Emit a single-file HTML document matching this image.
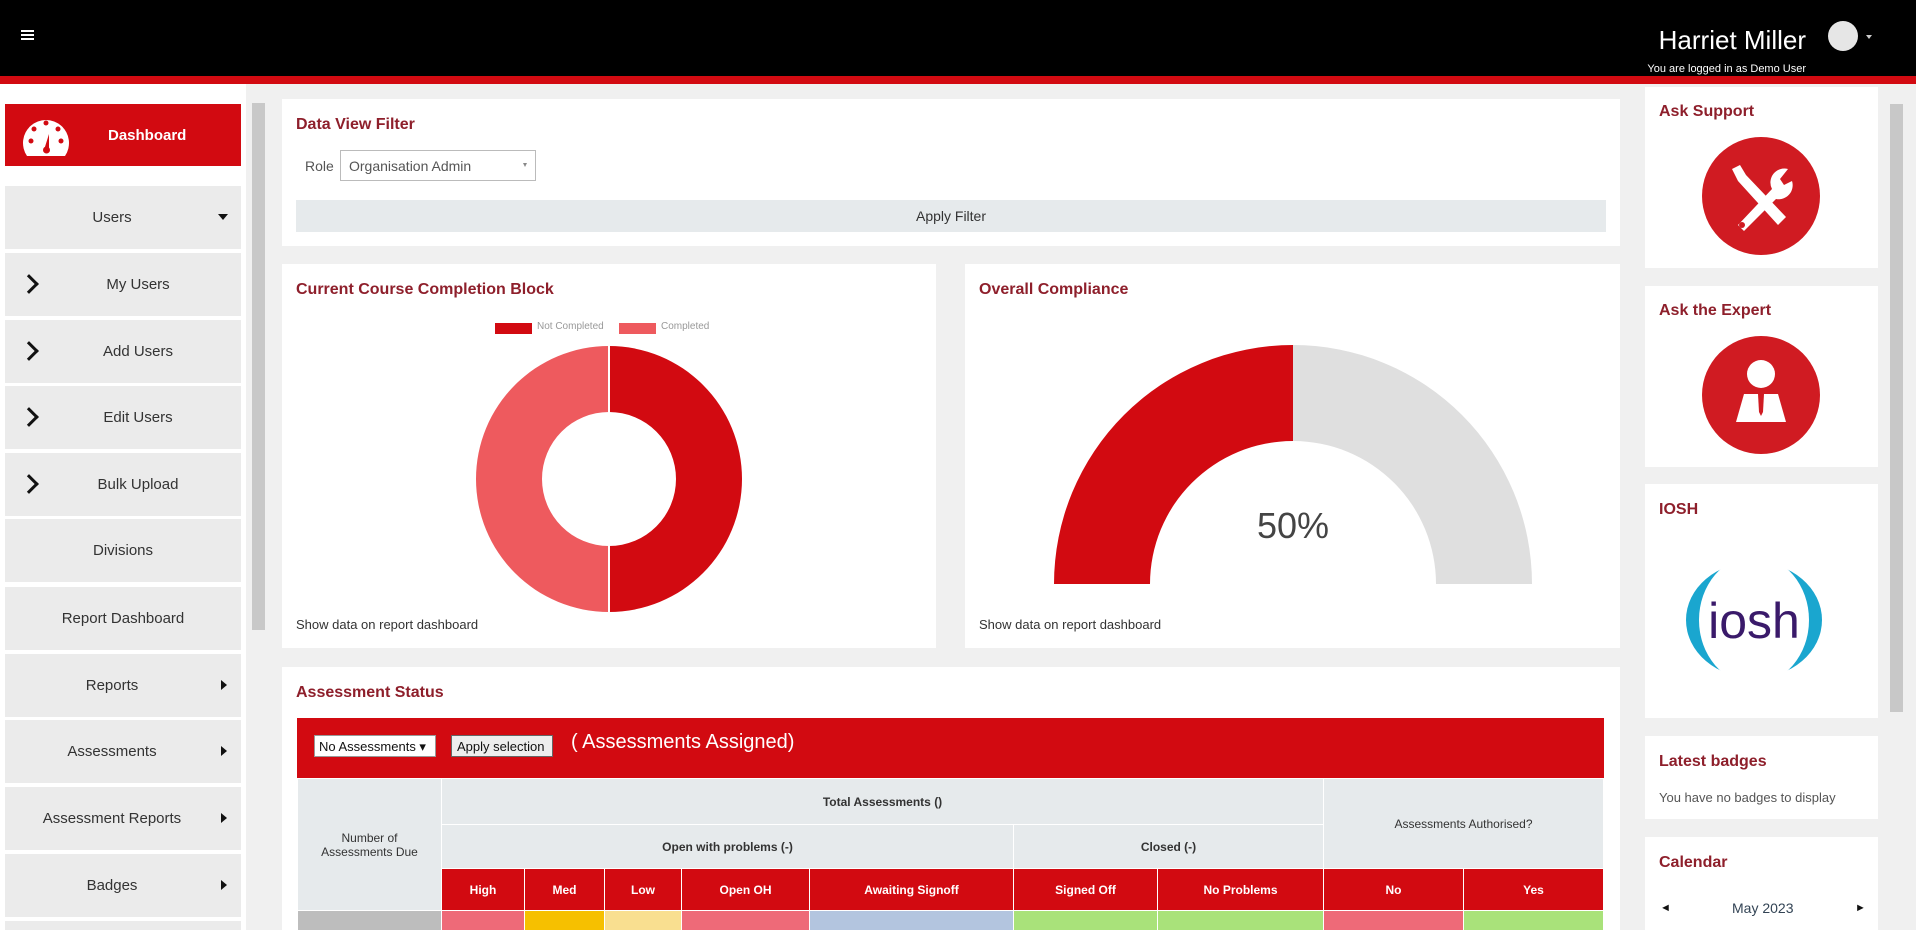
<!DOCTYPE html>
<html><head><meta charset="utf-8"><style>
*{box-sizing:border-box;margin:0;padding:0}
html,body{width:1916px;height:930px;overflow:hidden}
body{background:#f0f0f0;font-family:"Liberation Sans",sans-serif;color:#333}
#w{position:relative;width:1916px;height:930px;overflow:hidden}
.a{position:absolute}
.hdr{left:0;top:0;width:1916px;height:76px;background:#000}
.red{left:0;top:76px;width:1916px;height:8px;background:#d20a11}
.side{left:0;top:84px;width:246px;height:846px;background:#fff}
.item{position:absolute;left:5px;width:236px;height:63px;background:#ebebeb;font-size:15px;color:#333;display:flex;align-items:center;justify-content:center}
.card{position:absolute;background:#fff}
.ttl{position:absolute;font-size:16px;font-weight:bold;color:#8e1f2b}
.rt{position:absolute;font-size:16px;font-weight:bold;color:#8e1f2b}
.chev{position:absolute;left:22px;width:14px;height:14px;border-right:3px solid #111;border-top:3px solid #111;transform:rotate(45deg)}
.tri{position:absolute;left:221px;width:0;height:0;border-top:5px solid transparent;border-bottom:5px solid transparent;border-left:6px solid #111}
table{border-collapse:collapse;position:absolute;left:297px;top:778px;width:1307px;font-size:12px}
td{text-align:center;vertical-align:middle;border:1px solid #fff}
.g{background:#e6eaec;color:#333}
.h{background:#d20a11;color:#fff;font-weight:bold}
</style></head><body><div id="w">
<div class="a hdr"></div>
<div class="a" style="left:21px;top:30px;width:13px;height:2px;background:#fff;box-shadow:0 4px #fff,0 8px #fff"></div>
<div class="a" style="left:1600px;top:25px;font-size:26px;color:#fff;width:206px;text-align:right">Harriet Miller</div>
<div class="a" style="left:1600px;top:63px;font-size:11px;color:#fff;width:206px;text-align:right">You are logged in as Demo User</div>
<div class="a" style="left:1828px;top:21px;width:30px;height:30px;border-radius:50%;background:#e6e6e6"></div>
<div class="a" style="left:1866px;top:35px;border-left:3px solid transparent;border-right:3px solid transparent;border-top:4px solid #ccc"></div>
<div class="a red"></div>
<div class="a side"></div>
<div class="item" style="top:104px;height:62px;background:#d20a11;color:#fff;font-weight:bold;justify-content:flex-start;padding-left:103px">Dashboard</div>
<svg class="a" style="left:22px;top:114px" width="48" height="44" viewBox="0 0 48 44"><path d="M5 42 A23 23 0 1 1 43 42 Z" fill="#fff"/><circle cx="9" cy="27" r="2.5" fill="#d20a11"/><circle cx="12" cy="15" r="2.5" fill="#d20a11"/><circle cx="24" cy="9" r="2.5" fill="#d20a11"/><circle cx="36" cy="15" r="2.5" fill="#d20a11"/><circle cx="39" cy="27" r="2.5" fill="#d20a11"/><path d="M22 36 L27 20 L27 36Z" fill="#d20a11"/><circle cx="24.5" cy="36" r="3.5" fill="#d20a11"/></svg>
<div class="item" style="top:186px;padding-right:22px">Users</div>
<div class="a" style="left:218px;top:214px;border-left:5px solid transparent;border-right:5px solid transparent;border-top:6px solid #111"></div>
<div class="item" style="top:253px;padding-left:30px">My Users</div><div class="chev" style="top:277px"></div>
<div class="item" style="top:320px;padding-left:30px">Add Users</div><div class="chev" style="top:344px"></div>
<div class="item" style="top:386px;padding-left:30px">Edit Users</div><div class="chev" style="top:410px"></div>
<div class="item" style="top:453px;padding-left:30px">Bulk Upload</div><div class="chev" style="top:477px"></div>
<div class="item" style="top:519px">Divisions</div>
<div class="item" style="top:587px">Report Dashboard</div>
<div class="item" style="top:654px;padding-right:22px">Reports</div><div class="tri" style="top:680px"></div>
<div class="item" style="top:720px;padding-right:22px">Assessments</div><div class="tri" style="top:746px"></div>
<div class="item" style="top:787px;padding-right:22px">Assessment Reports</div><div class="tri" style="top:813px"></div>
<div class="item" style="top:854px;padding-right:22px">Badges</div><div class="tri" style="top:880px"></div>
<div class="item" style="top:921px;height:9px"></div>
<div class="a" style="left:252px;top:103px;width:13px;height:527px;background:#c8c8c8"></div>

<div class="card" style="left:282px;top:99px;width:1338px;height:147px"></div>
<div class="ttl" style="left:296px;top:116px">Data View Filter</div>
<div class="a" style="left:305px;top:158px;font-size:14px;color:#555">Role</div>
<div class="a" style="left:340px;top:150px;width:196px;height:31px;border:1px solid #bbb;background:#fff;font-size:14px;color:#555;padding:7px 8px">Organisation Admin</div>
<div class="a" style="left:523px;top:163px;border-left:2px solid transparent;border-right:2px solid transparent;border-top:4px solid #888"></div>
<div class="a" style="left:296px;top:200px;width:1310px;height:32px;background:#e6eaec;font-size:14px;color:#333;text-align:center;line-height:32px">Apply Filter</div>

<div class="card" style="left:282px;top:264px;width:654px;height:384px"></div>
<div class="ttl" style="left:296px;top:281px">Current Course Completion Block</div>
<div class="a" style="left:495px;top:323px;width:37px;height:11px;background:#d20a11"></div>
<div class="a" style="left:537px;top:321px;font-size:10px;color:#999">Not Completed</div>
<div class="a" style="left:619px;top:323px;width:37px;height:11px;background:#ee5a5e"></div>
<div class="a" style="left:661px;top:321px;font-size:10px;color:#999">Completed</div>
<svg class="a" style="left:476px;top:345px" width="266" height="268" viewBox="0 0 266 268"><path d="M133 1 A133 133 0 0 1 133 267 L133 201 A67 67 0 0 0 133 67Z" fill="#d20a11"/><path d="M133 1 A133 133 0 0 0 133 267 L133 201 A67 67 0 0 1 133 67Z" fill="#ee5a5e"/><line x1="133" y1="0" x2="133" y2="68" stroke="#fff" stroke-width="2"/><line x1="133" y1="200" x2="133" y2="268" stroke="#fff" stroke-width="2"/></svg>
<div class="a" style="left:296px;top:617px;font-size:13px;color:#333">Show data on report dashboard</div>

<div class="card" style="left:965px;top:264px;width:655px;height:384px"></div>
<div class="ttl" style="left:979px;top:281px">Overall Compliance</div>
<svg class="a" style="left:1054px;top:344px" width="478" height="240" viewBox="0 0 478 240"><path d="M0 240 A239 239 0 0 1 239 1 L239 97 A143 143 0 0 0 96 240Z" fill="#d20a11"/><path d="M478 240 A239 239 0 0 0 239 1 L239 97 A143 143 0 0 1 382 240Z" fill="#dfdfdf"/></svg>
<div class="a" style="left:1233px;top:505px;width:120px;text-align:center;font-size:36px;color:#444">50%</div>
<div class="a" style="left:979px;top:617px;font-size:13px;color:#333">Show data on report dashboard</div>

<div class="card" style="left:282px;top:667px;width:1338px;height:263px"></div>
<div class="ttl" style="left:296px;top:684px">Assessment Status</div>
<div class="a" style="left:297px;top:718px;width:1307px;height:60px;background:#d20a11"></div>
<div class="a" style="left:314px;top:735px;width:122px;height:22px;background:#fff;border:1px solid #999;font-size:13px;padding:3px 4px;color:#111">No Assessments ▾</div>
<div class="a" style="left:451px;top:735px;width:102px;height:22px;background:#eee;border:1px solid #666;font-size:13px;padding:3px 5px;color:#111">Apply selection</div>
<div class="a" style="left:571px;top:731px;font-size:20px;color:#fff">( Assessments Assigned)</div>
<table>
<tr style="height:46px"><td class="g" rowspan="3" style="width:144px">Number of<br>Assessments Due</td><td class="g" colspan="7" style="font-weight:bold">Total Assessments ()</td><td class="g" colspan="2" rowspan="2">Assessments Authorised?</td></tr>
<tr style="height:44px"><td class="g" colspan="5" style="font-weight:bold">Open with problems (-)</td><td class="g" colspan="2" style="font-weight:bold">Closed (-)</td></tr>
<tr style="height:42px"><td class="h" style="width:83px">High</td><td class="h" style="width:80px">Med</td><td class="h" style="width:77px">Low</td><td class="h" style="width:128px">Open OH</td><td class="h" style="width:204px">Awaiting Signoff</td><td class="h" style="width:144px">Signed Off</td><td class="h" style="width:166px">No Problems</td><td class="h" style="width:140px">No</td><td class="h">Yes</td></tr>
<tr style="height:20px"><td style="background:#bdbdbd"></td><td style="background:#ee6a78"></td><td style="background:#f6c000"></td><td style="background:#f9df90"></td><td style="background:#ee6a78"></td><td style="background:#b3c5df"></td><td style="background:#a9e27a"></td><td style="background:#a9e27a"></td><td style="background:#ee6a78"></td><td style="background:#a9e27a"></td></tr>
</table>

<div class="card" style="left:1645px;top:87px;width:233px;height:181px"></div>
<div class="rt" style="left:1659px;top:103px">Ask Support</div>
<svg class="a" style="left:1702px;top:137px" width="118" height="118" viewBox="0 0 118 118"><circle cx="59" cy="59" r="59" fill="#d01b22"/><path d="M30 32 L38 28 L44 38 L84 80 L76 88 L36 44Z" fill="#fff"/><path d="M36 88 L70 52 A14 14 0 0 1 86 32 L78 42 L82 48 L90 44 A14 14 0 0 1 74 62 L42 94Z" fill="#fff"/><circle cx="40" cy="88" r="3" fill="#d01b22"/></svg>
<div class="card" style="left:1645px;top:286px;width:233px;height:181px"></div>
<div class="rt" style="left:1659px;top:302px">Ask the Expert</div>
<svg class="a" style="left:1702px;top:336px" width="118" height="118" viewBox="0 0 118 118"><circle cx="59" cy="59" r="59" fill="#d01b22"/><circle cx="59" cy="38" r="14" fill="#fff"/><path d="M34 86 L42 58 L76 58 L84 86Z" fill="#fff"/><path d="M56 58 L62 58 L61 76 L59 80 L57 76Z" fill="#d01b22"/></svg>
<div class="card" style="left:1645px;top:484px;width:233px;height:234px"></div>
<div class="rt" style="left:1659px;top:501px">IOSH</div>
<svg class="a" style="left:1684px;top:560px" width="140" height="120" viewBox="0 0 140 120"><ellipse cx="70" cy="60" rx="68" ry="58" fill="#1aa6cf"/><ellipse cx="70" cy="60" rx="55" ry="64" fill="#fff"/><text x="70" y="78" text-anchor="middle" font-family="Liberation Sans,sans-serif" font-size="50" fill="#3a1a6a">iosh</text></svg>
<div class="card" style="left:1645px;top:736px;width:233px;height:83px"></div>
<div class="rt" style="left:1659px;top:753px">Latest badges</div>
<div class="a" style="left:1659px;top:790px;font-size:13px;color:#555">You have no badges to display</div>
<div class="card" style="left:1645px;top:837px;width:233px;height:93px"></div>
<div class="rt" style="left:1659px;top:854px">Calendar</div>
<div class="a" style="left:1660px;top:902px;font-size:11px;color:#111">◄</div>
<div class="a" style="left:1732px;top:900px;font-size:14px;color:#345">May 2023</div>
<div class="a" style="left:1855px;top:902px;font-size:11px;color:#111">►</div>
<div class="a" style="left:1889px;top:84px;width:15px;height:846px;background:#f0f0f0"></div>
<div class="a" style="left:1890px;top:104px;width:13px;height:608px;background:#c8c8c8"></div>
</div></body></html>
